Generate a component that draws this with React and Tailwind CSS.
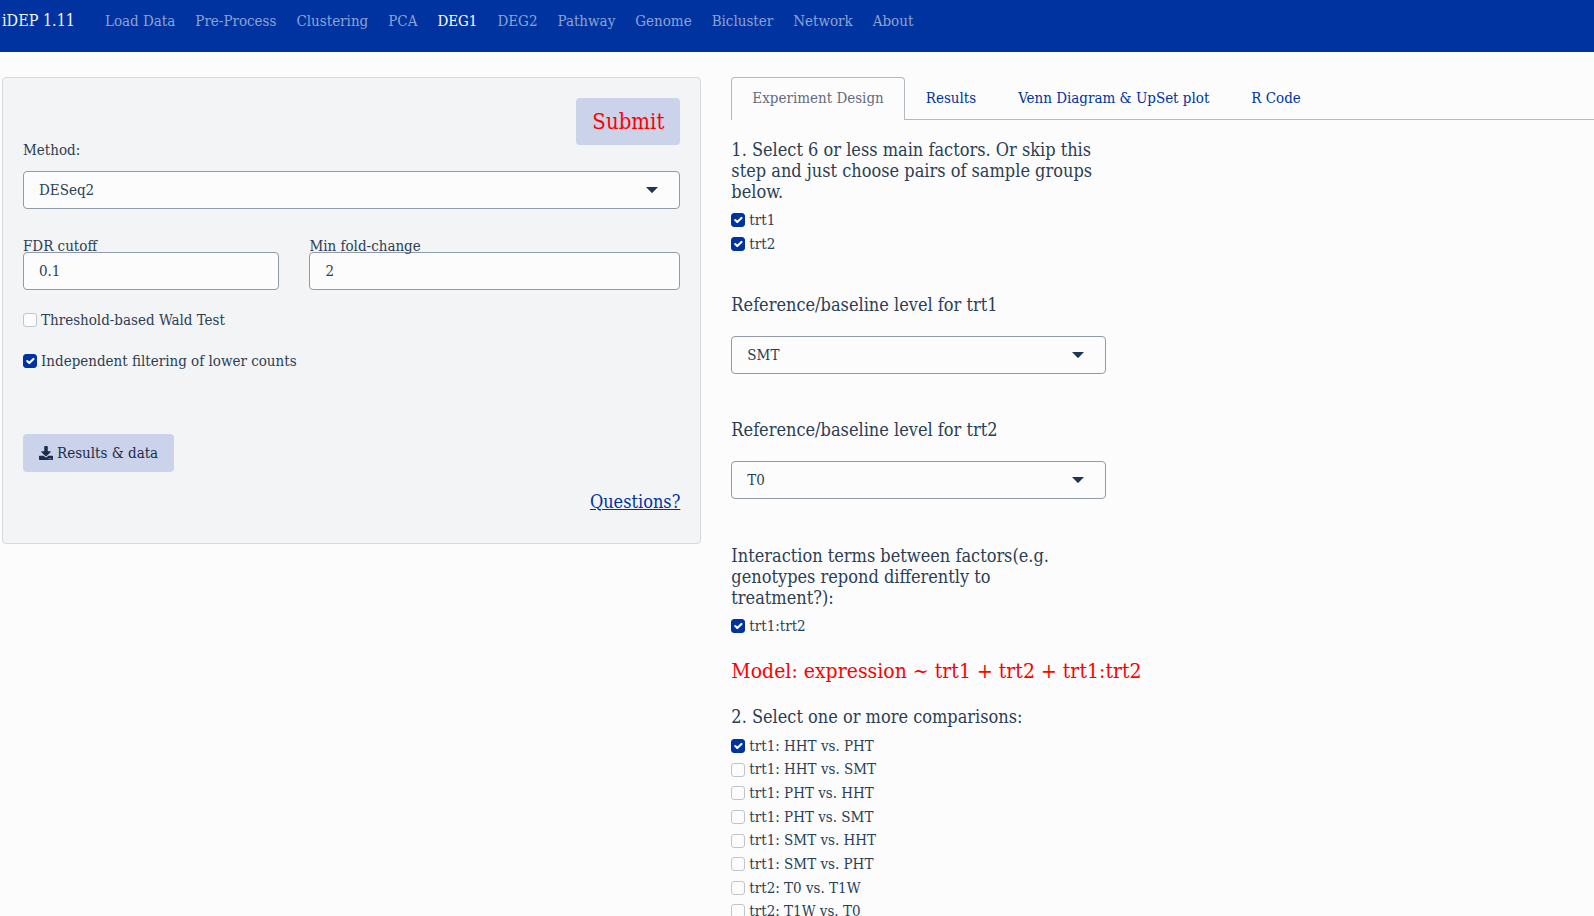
import React, { useState } from "react";
import { FaDownload } from "react-icons/fa";

const navItems = [
  "Load Data",
  "Pre-Process",
  "Clustering",
  "PCA",
  "DEG1",
  "DEG2",
  "Pathway",
  "Genome",
  "Bicluster",
  "Network",
  "About",
];

const tabs = [
  "Experiment Design",
  "Results",
  "Venn Diagram & UpSet plot",
  "R Code",
];

const comparisons = [
  "trt1: HHT vs. PHT",
  "trt1: HHT vs. SMT",
  "trt1: PHT vs. HHT",
  "trt1: PHT vs. SMT",
  "trt1: SMT vs. HHT",
  "trt1: SMT vs. PHT",
  "trt2: T0 vs. T1W",
  "trt2: T1W vs. T0",
];

const Checkbox = ({ label, defaultChecked = false }) => {
  return (
    <label className="flex h-6 items-center gap-1 text-[15px]">
      <span className="relative flex">
        <input
          type="checkbox"
          defaultChecked={defaultChecked}
          className="peer size-[14px] appearance-none rounded-[3px] border border-[#bfc4cd] bg-[#fcfcfc] checked:border-[#0033a0] checked:bg-[#0033a0]"
        />
        <svg
          viewBox="0 0 20 20"
          className="pointer-events-none absolute inset-0 hidden size-[14px] peer-checked:block"
        >
          <path
            d="M6 10l3 3l6-6"
            fill="none"
            stroke="#fff"
            strokeWidth="3"
            strokeLinecap="round"
            strokeLinejoin="round"
          />
        </svg>
      </span>
      {label}
    </label>
  );
};

const Select = ({ id, options, label }) => {
  return (
    <div className="relative">
      <select
        id={id}
        aria-label={label}
        className="block h-[38px] w-full appearance-none rounded border border-[#919aa8] bg-[#fcfcfc] px-[15px] text-[15px]"
      >
        {options.map((option) => (
          <option key={option}>{option}</option>
        ))}
      </select>
      <svg
        viewBox="0 0 12 6"
        className="pointer-events-none absolute top-4 right-[22px] h-[6px] w-3"
      >
        <path d="M0 0h12L6.7 5.6q-.7.6-1.4 0z" fill="#1f3554" />
      </svg>
    </div>
  );
};

const NumberField = ({ id, label, value, className }) => {
  return (
    <div className={className}>
      <label htmlFor={id} className="block h-4 text-[15px] leading-5">
        {label}
      </label>
      <input
        id={id}
        type="text"
        inputMode="decimal"
        defaultValue={value}
        className="block h-[38px] w-full rounded border border-[#919aa8] bg-[#fcfcfc] px-[15px] text-[15px]"
      />
    </div>
  );
};

export default function App() {
  const [activeNav, setActiveNav] = useState("DEG1");
  const [activeTab, setActiveTab] = useState("Experiment Design");

  return (
    <div className="h-screen overflow-hidden bg-[#fcfcfc] font-['DejaVu_Serif_Condensed','DejaVu_Serif',serif] text-[#2b3e54]">
      <nav className="flex h-[52px] bg-[#0033a0] pl-[2px]">
        <a
          href="#home"
          className="mr-5 flex h-[42px] items-center text-base text-[#f2f5fa]"
        >
          iDEP 1.11
        </a>
        <ul className="flex h-[42px] items-center text-[15px]">
          {navItems.map((item) => (
            <li key={item}>
              <a
                href="#nav"
                onClick={() => setActiveNav(item)}
                className={
                  activeNav === item
                    ? "px-[10px] text-white"
                    : "px-[10px] text-[#8da3d2]"
                }
              >
                {item}
              </a>
            </li>
          ))}
        </ul>
      </nav>

      <div className="flex items-start gap-[30px] pt-[25px]">
        <aside className="w-[44%] shrink-0 pl-[2px]">
          <form
            onSubmit={(e) => e.preventDefault()}
            className="rounded border border-[#d5d8de] bg-[#f3f4f6] px-5 pt-5 pb-[29px]"
          >
            <div className="flex justify-end">
              <button
                type="submit"
                className="h-[47px] rounded bg-[#cbd3ea] px-4 text-[22px] text-[#ff0000]"
              >
                Submit
              </button>
            </div>

            <label
              htmlFor="method"
              className="mb-4 block h-[10px] text-[15px] leading-[10px]"
            >
              Method:
            </label>
            <Select id="method" options={["DESeq2", "limma-voom"]} />

            <div className="mt-[27px] grid grid-cols-12 gap-[30px]">
              <NumberField
                id="fdr"
                label="FDR cutoff"
                value="0.1"
                className="col-span-5"
              />
              <NumberField
                id="fold"
                label="Min fold-change"
                value="2"
                className="col-span-7"
              />
            </div>

            <div className="mt-[18px] flex flex-col gap-[17px]">
              <Checkbox label="Threshold-based Wald Test" />
              <Checkbox
                label="Independent filtering of lower counts"
                defaultChecked
              />
            </div>

            <button
              type="button"
              className="mt-[61px] flex h-[38px] items-center gap-1 rounded bg-[#cbd3ea] px-4 text-[15px] text-[#1c2c4c]"
            >
              <FaDownload className="size-[14px]" />
              Results & data
            </button>

            <div className="mt-[18px] flex justify-end">
              <a
                href="#questions"
                className="text-lg leading-6 text-[#0033a0] underline"
              >
                Questions?
              </a>
            </div>
          </form>
        </aside>

        <main className="min-w-0 flex-1">
          <div className="flex border-b border-[#b4bac5] text-[15px]">
            {tabs.map((tab) => (
              <button
                key={tab}
                type="button"
                onClick={() => setActiveTab(tab)}
                className={
                  activeTab === tab
                    ? "-mb-px h-[43px] rounded-t border border-b-0 border-[#b4bac5] bg-[#fcfcfc] px-5 pb-[2px] text-[#626c7c]"
                    : "h-[42px] px-[21px] text-[#0033a0]"
                }
              >
                {tab}
              </button>
            ))}
          </div>

          <div className="w-[375px] max-w-full pt-[19px]">
            <h4 className="mb-[6px] text-lg leading-[21px]">
              1. Select 6 or less main factors. Or skip this step and just
              choose pairs of sample groups below.
            </h4>
            <Checkbox label="trt1" defaultChecked />
            <Checkbox label="trt2" defaultChecked />

            <h4 className="mt-[38px] mb-[21px] text-lg leading-[21px]">
              Reference/baseline level for trt1
            </h4>
            <Select
              id="level1"
              label="Reference level for trt1"
              options={["SMT", "HHT", "PHT"]}
            />

            <h4 className="mt-[45px] mb-[21px] text-lg leading-[21px]">
              Reference/baseline level for trt2
            </h4>
            <Select
              id="level2"
              label="Reference level for trt2"
              options={["T0", "T1W"]}
            />

            <h4 className="mt-[46px] mb-[6px] text-lg leading-[21px]">
              Interaction terms between factors(e.g. genotypes repond
              differently to
              <br />
              treatment?):
            </h4>
            <Checkbox label="trt1:trt2" defaultChecked />
          </div>

          <h3 className="mt-5 mb-[22px] text-[21px] leading-[26px] text-[#ff0000]">
            Model: expression ~ trt1 + trt2 + trt1:trt2
          </h3>

          <h4 className="mb-[7px] text-lg leading-[21px]">
            2. Select one or more comparisons:
          </h4>
          <div className="grid h-[189px] auto-rows-fr">
            {comparisons.map((item, index) => (
              <Checkbox key={item} label={item} defaultChecked={index === 0} />
            ))}
          </div>
        </main>
      </div>
    </div>
  );
}
